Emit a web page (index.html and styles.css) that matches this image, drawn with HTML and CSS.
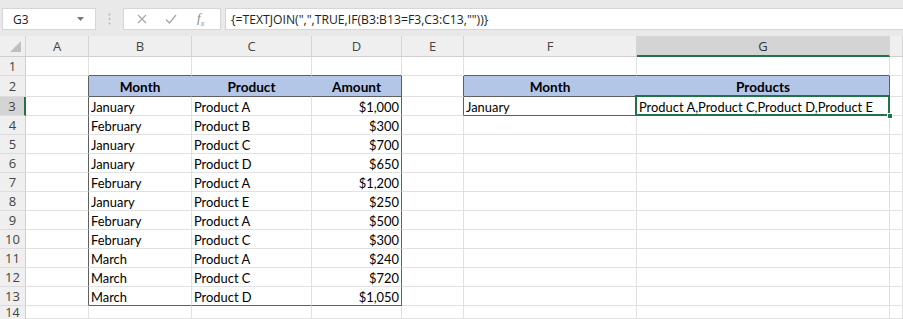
FILE: index.html
```html
<!DOCTYPE html>
<html>
<head>
<meta charset="utf-8">
<link rel="stylesheet" href="styles.css">
</head>
<body>
<div class="app">
  <div class="fbar">
    <div class="namebox"><span>G3</span>
      <svg class="dd" width="8" height="5" viewBox="0 0 8 5"><path d="M0 0h7L3.5 4z" fill="#777"/></svg>
    </div>
    <div class="dots"><svg width="3" height="12" viewBox="0 0 3 12"><circle cx="1.5" cy="1.5" r="1" fill="#b5b5b5"/><circle cx="1.5" cy="6" r="1" fill="#b5b5b5"/><circle cx="1.5" cy="10.5" r="1" fill="#b5b5b5"/></svg></div>
    <div class="fxbox">
      <svg width="10" height="10" viewBox="0 0 10 10"><path d="M1 1l8 8M9 1l-8 8" stroke="#a6a6a6" stroke-width="1.2"/></svg>
      <svg width="12" height="10" viewBox="0 0 12 10"><path d="M1 5.5l3.5 3.5L11 1" stroke="#a6a6a6" stroke-width="1.2" fill="none"/></svg>
      <span class="fx"><i>f</i><sub>x</sub></span>
    </div>
    <div class="formula">{=TEXTJOIN(",",TRUE,IF(B3:B13=F3,C3:C13,""))}</div>
  </div>
  <div class="sheet">
    <!-- header -->
    <div class="ch corner"><svg width="12" height="12" viewBox="0 0 12 12"><path d="M11 0v11H0z" fill="#c0c0c0"/></svg></div>
    <div class="ch">A</div><div class="ch">B</div><div class="ch">C</div><div class="ch">D</div><div class="ch">E</div><div class="ch">F</div><div class="ch sel">G</div><div class="ch"></div>
    <!-- row 1 -->
    <div class="rh">1</div><div class="c"></div><div class="c tb"></div><div class="c tb"></div><div class="c tb"></div><div class="c"></div><div class="c tb"></div><div class="c tb"></div><div class="c"></div>
    <!-- row 2 -->
    <div class="rh">2</div><div class="c tr"></div><div class="c hd nr tb">Month</div><div class="c hd nr tb">Product</div><div class="c hd tr tb">Amount</div><div class="c tr"></div><div class="c hd nr tb">Month</div><div class="c hd tr tb">Products</div><div class="c"></div>
    <!-- row 3 -->
    <div class="rh rsel">3</div><div class="c tr"></div><div class="c">January</div><div class="c">Product A</div><div class="c num tr">$1,000</div><div class="c tr"></div><div class="c tb">January</div><div class="c tb tr active">Product A,Product C,Product D,Product E<span class="handle"></span></div><div class="c"></div>
    <!-- row 4 -->
    <div class="rh">4</div><div class="c tr"></div><div class="c">February</div><div class="c">Product B</div><div class="c num tr">$300</div><div class="c"></div><div class="c"></div><div class="c"></div><div class="c"></div>
    <!-- row 5 -->
    <div class="rh">5</div><div class="c tr"></div><div class="c">January</div><div class="c">Product C</div><div class="c num tr">$700</div><div class="c"></div><div class="c"></div><div class="c"></div><div class="c"></div>
    <!-- row 6 -->
    <div class="rh">6</div><div class="c tr"></div><div class="c">January</div><div class="c">Product D</div><div class="c num tr">$650</div><div class="c"></div><div class="c"></div><div class="c"></div><div class="c"></div>
    <!-- row 7 -->
    <div class="rh">7</div><div class="c tr"></div><div class="c">February</div><div class="c">Product A</div><div class="c num tr">$1,200</div><div class="c"></div><div class="c"></div><div class="c"></div><div class="c"></div>
    <!-- row 8 -->
    <div class="rh">8</div><div class="c tr"></div><div class="c">January</div><div class="c">Product E</div><div class="c num tr">$250</div><div class="c"></div><div class="c"></div><div class="c"></div><div class="c"></div>
    <!-- row 9 -->
    <div class="rh">9</div><div class="c tr"></div><div class="c">February</div><div class="c">Product A</div><div class="c num tr">$500</div><div class="c"></div><div class="c"></div><div class="c"></div><div class="c"></div>
    <!-- row 10 -->
    <div class="rh">10</div><div class="c tr"></div><div class="c">February</div><div class="c">Product C</div><div class="c num tr">$300</div><div class="c"></div><div class="c"></div><div class="c"></div><div class="c"></div>
    <!-- row 11 -->
    <div class="rh">11</div><div class="c tr"></div><div class="c">March</div><div class="c">Product A</div><div class="c num tr">$240</div><div class="c"></div><div class="c"></div><div class="c"></div><div class="c"></div>
    <!-- row 12 -->
    <div class="rh">12</div><div class="c tr"></div><div class="c">March</div><div class="c">Product C</div><div class="c num tr">$720</div><div class="c"></div><div class="c"></div><div class="c"></div><div class="c"></div>
    <!-- row 13 -->
    <div class="rh">13</div><div class="c tr"></div><div class="c tb">March</div><div class="c tb">Product D</div><div class="c num tr tb">$1,050</div><div class="c"></div><div class="c"></div><div class="c"></div><div class="c"></div>
    <!-- row 14 -->
    <div class="rh last">14</div><div class="c"></div><div class="c"></div><div class="c"></div><div class="c"></div><div class="c"></div><div class="c"></div><div class="c"></div><div class="c"></div>
  </div>
</div>
</body>
</html>
```
FILE: styles.css
```css
* { box-sizing: border-box; }
html, body { margin: 0; padding: 0; background: #fff; overflow: hidden; }
.app { width: 903px; height: 319px; overflow: hidden; }

.fbar {
  height: 36px;
  background: #e9e9e9;
  padding: 8px 0 6px 2px;
  display: flex;
  align-items: stretch;
  font-family: "Open Sans", "Noto Sans", sans-serif;
}
.namebox {
  width: 94px;
  background: #fff;
  border: 1px solid #d6d6d6;
  display: flex;
  align-items: center;
  justify-content: space-between;
  padding: 0 10px 0 10px;
  font-size: 12px;
  color: #222;
}
.dots { width: 27px; display: flex; align-items: center; justify-content: center; }
.fxbox {
  width: 98px;
  background: #fff;
  border: 1px solid #d6d6d6;
  display: flex;
  align-items: center;
  padding: 0 8px 0 13px;
  gap: 18px;
}
.fx { font-family: "Liberation Serif", serif; color: #888; font-size: 13px; margin-left: 2px; }
.fx sub { font-size: 8px; font-style: italic; }
.formula {
  flex: 1;
  margin-left: 4px;
  background: #fff;
  border: 1px solid #d6d6d6;
  border-right: none;
  display: flex;
  align-items: center;
  padding-left: 5px;
  font-size: 12.2px;
  color: #222;
  white-space: nowrap;
}

.sheet {
  display: grid;
  grid-template-columns: 26px 63px 103px 120px 90px 62px 173px 253px 13px;
  grid-template-rows: 21px 19px 21px repeat(11, 19px) 13px;
  font-family: Lato, "Liberation Sans", sans-serif;
  font-size: 12.9px;
  color: #000;
}
.ch {
  background: #efefef;
  border-right: 1px solid #d5d5d5;
  border-bottom: 1px solid #cfcfcf;
  display: flex;
  align-items: center;
  justify-content: center;
  font-family: "Open Sans", "Noto Sans", sans-serif;
  font-size: 13px;
  color: #444;
}
.ch.corner { justify-content: flex-end; align-items: flex-end; padding: 0 3px 3px 0; }
.ch.sel { background: #d4d4d4; border-bottom: 2px solid #217346; color: #333; }
.rh {
  background: #efefef;
  border-right: 1px solid #cfcfcf;
  border-bottom: 1px solid #dcdcdc;
  display: flex;
  align-items: center;
  justify-content: center;
  font-family: "Open Sans", "Noto Sans", sans-serif;
  font-size: 13px;
  color: #444;
}
.rh.last { border-bottom: none; line-height: 12px; font-size: 12.5px; align-items: flex-start; padding-top: 1px; }
.rh.rsel { background: #d4d4d4; border-right: 2px solid #217346; }
.c {
  border-right: 1px solid #e1e1e1;
  border-bottom: 1px solid #e1e1e1;
  display: flex;
  align-items: center;
  padding: 1px 2px 0 2px;
  white-space: nowrap;
  position: relative;
}
.c.num { justify-content: flex-end; }
.c.hd { background: #b4c6e7; font-weight: 700; font-size: 13.6px; justify-content: center; }
.c.nr { border-right-color: #b4c6e7; }
.c.tr { border-right-color: #5f5f5f; }
.c.tb { border-bottom-color: #5f5f5f; }
.c.active::after {
  content: "";
  position: absolute;
  left: -2px; top: -2px; right: -1px; bottom: -1px;
  border: 2px solid #217346;
}
.handle {
  position: absolute;
  right: -4px; bottom: -4px;
  width: 6px; height: 6px;
  background: #217346;
  border: 1px solid #fff;
  z-index: 2;
}
```
